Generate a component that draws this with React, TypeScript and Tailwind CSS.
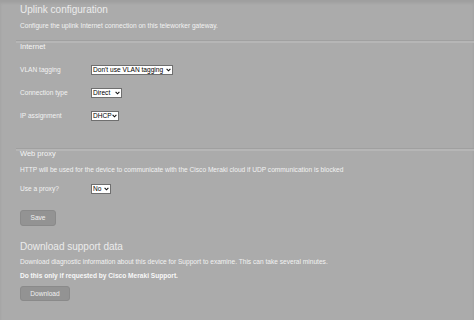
const font = { fontFamily: '"Liberation Sans", Arial, sans-serif' };

function FakeSelect({ value, width }: { value: string; width: string }) {
  return (
    <div
      className={`${width} flex h-[10px] items-center justify-between border border-[#6f6f6f] bg-white pl-[1px] pr-[1px] text-[6.6px] leading-none text-black`}
    >
      <span className="whitespace-nowrap">{value}</span>
      <svg width="5" height="4" viewBox="0 0 5 4" className="shrink-0">
        <path d="M0.6 0.8 L2.5 2.8 L4.4 0.8" fill="none" stroke="#111" strokeWidth="1.1" />
      </svg>
    </div>
  );
}

function Row({ label, value, width, className = '' }: { label: string; value: string; width: string; className?: string }) {
  return (
    <div className={`flex h-[10px] items-center ${className}`}>
      <div className="w-[71px] text-[6.6px] leading-none text-[#f2f2f2]">{label}</div>
      <FakeSelect value={value} width={width} />
    </div>
  );
}

function Divider({ className = '' }: { className?: string }) {
  return <div className={`ml-4 h-[3px] border-t border-[#a0a0a0] bg-[#b6b6b6] ${className}`} />;
}

export default function App() {
  return (
    <div
      style={font}
      className="min-h-[320px] w-full overflow-hidden bg-[#ababab] shadow-[inset_0_3px_3px_rgba(0,0,0,0.07)]"
    >
      <div className="px-5 pt-[3px]">
        <h1 className="h-[14px] text-[10px] leading-[14px] font-normal text-[#ececec]">Uplink configuration</h1>
        <p className="mt-[4px] text-[6.6px] leading-[9px] text-[#f2f2f2]">
          Configure the uplink Internet connection on this teleworker gateway.
        </p>
      </div>

      <Divider className="mt-[10px]" />

      <div className="px-5">
        <h2 className="text-[7.5px] leading-[8px] text-[#f4f4f4]">Internet</h2>
        <Row label="VLAN tagging" value="Don't use VLAN tagging" width="w-[82px]" className="mt-[14px]" />
        <Row label="Connection type" value="Direct" width="w-[31px]" className="mt-[13px]" />
        <Row label="IP assignment" value="DHCP" width="w-[28px]" className="mt-[13px]" />
      </div>

      <Divider className="mt-[27px]" />

      <div className="px-5">
        <h2 className="mt-[-1px] text-[7.5px] leading-[8px] text-[#f4f4f4]">Web proxy</h2>
        <p className="mt-[7px] text-[6.6px] leading-[9px] text-[#f2f2f2]">
          HTTP will be used for the device to communicate with the Cisco Meraki cloud if UDP communication is blocked
        </p>
        <Row label="Use a proxy?" value="No" width="w-[20px]" className="mt-[10px]" />

        <button className="mt-[16px] flex h-[16px] w-[36px] items-center justify-center rounded-[3px] border border-[#8a8a8a] bg-[#939393] text-[6.6px] text-[#f0f0f0]">
          Save
        </button>

        <h1 className="mt-[14px] text-[10px] leading-[14px] font-normal text-[#ececec]">Download support data</h1>
        <p className="mt-[3px] text-[6.6px] leading-[9px] text-[#f2f2f2]">
          Download diagnostic information about this device for Support to examine. This can take several minutes.
        </p>
        <p className="mt-[5px] text-[6.6px] leading-[9px] font-bold text-[#f8f8f8]">
          Do this only if requested by Cisco Meraki Support.
        </p>
        <button className="mt-[6px] flex h-[15px] w-[50px] items-center justify-center rounded-[3px] border border-[#8a8a8a] bg-[#939393] text-[6.6px] text-[#f0f0f0]">
          Download
        </button>
      </div>
    </div>
  );
}
